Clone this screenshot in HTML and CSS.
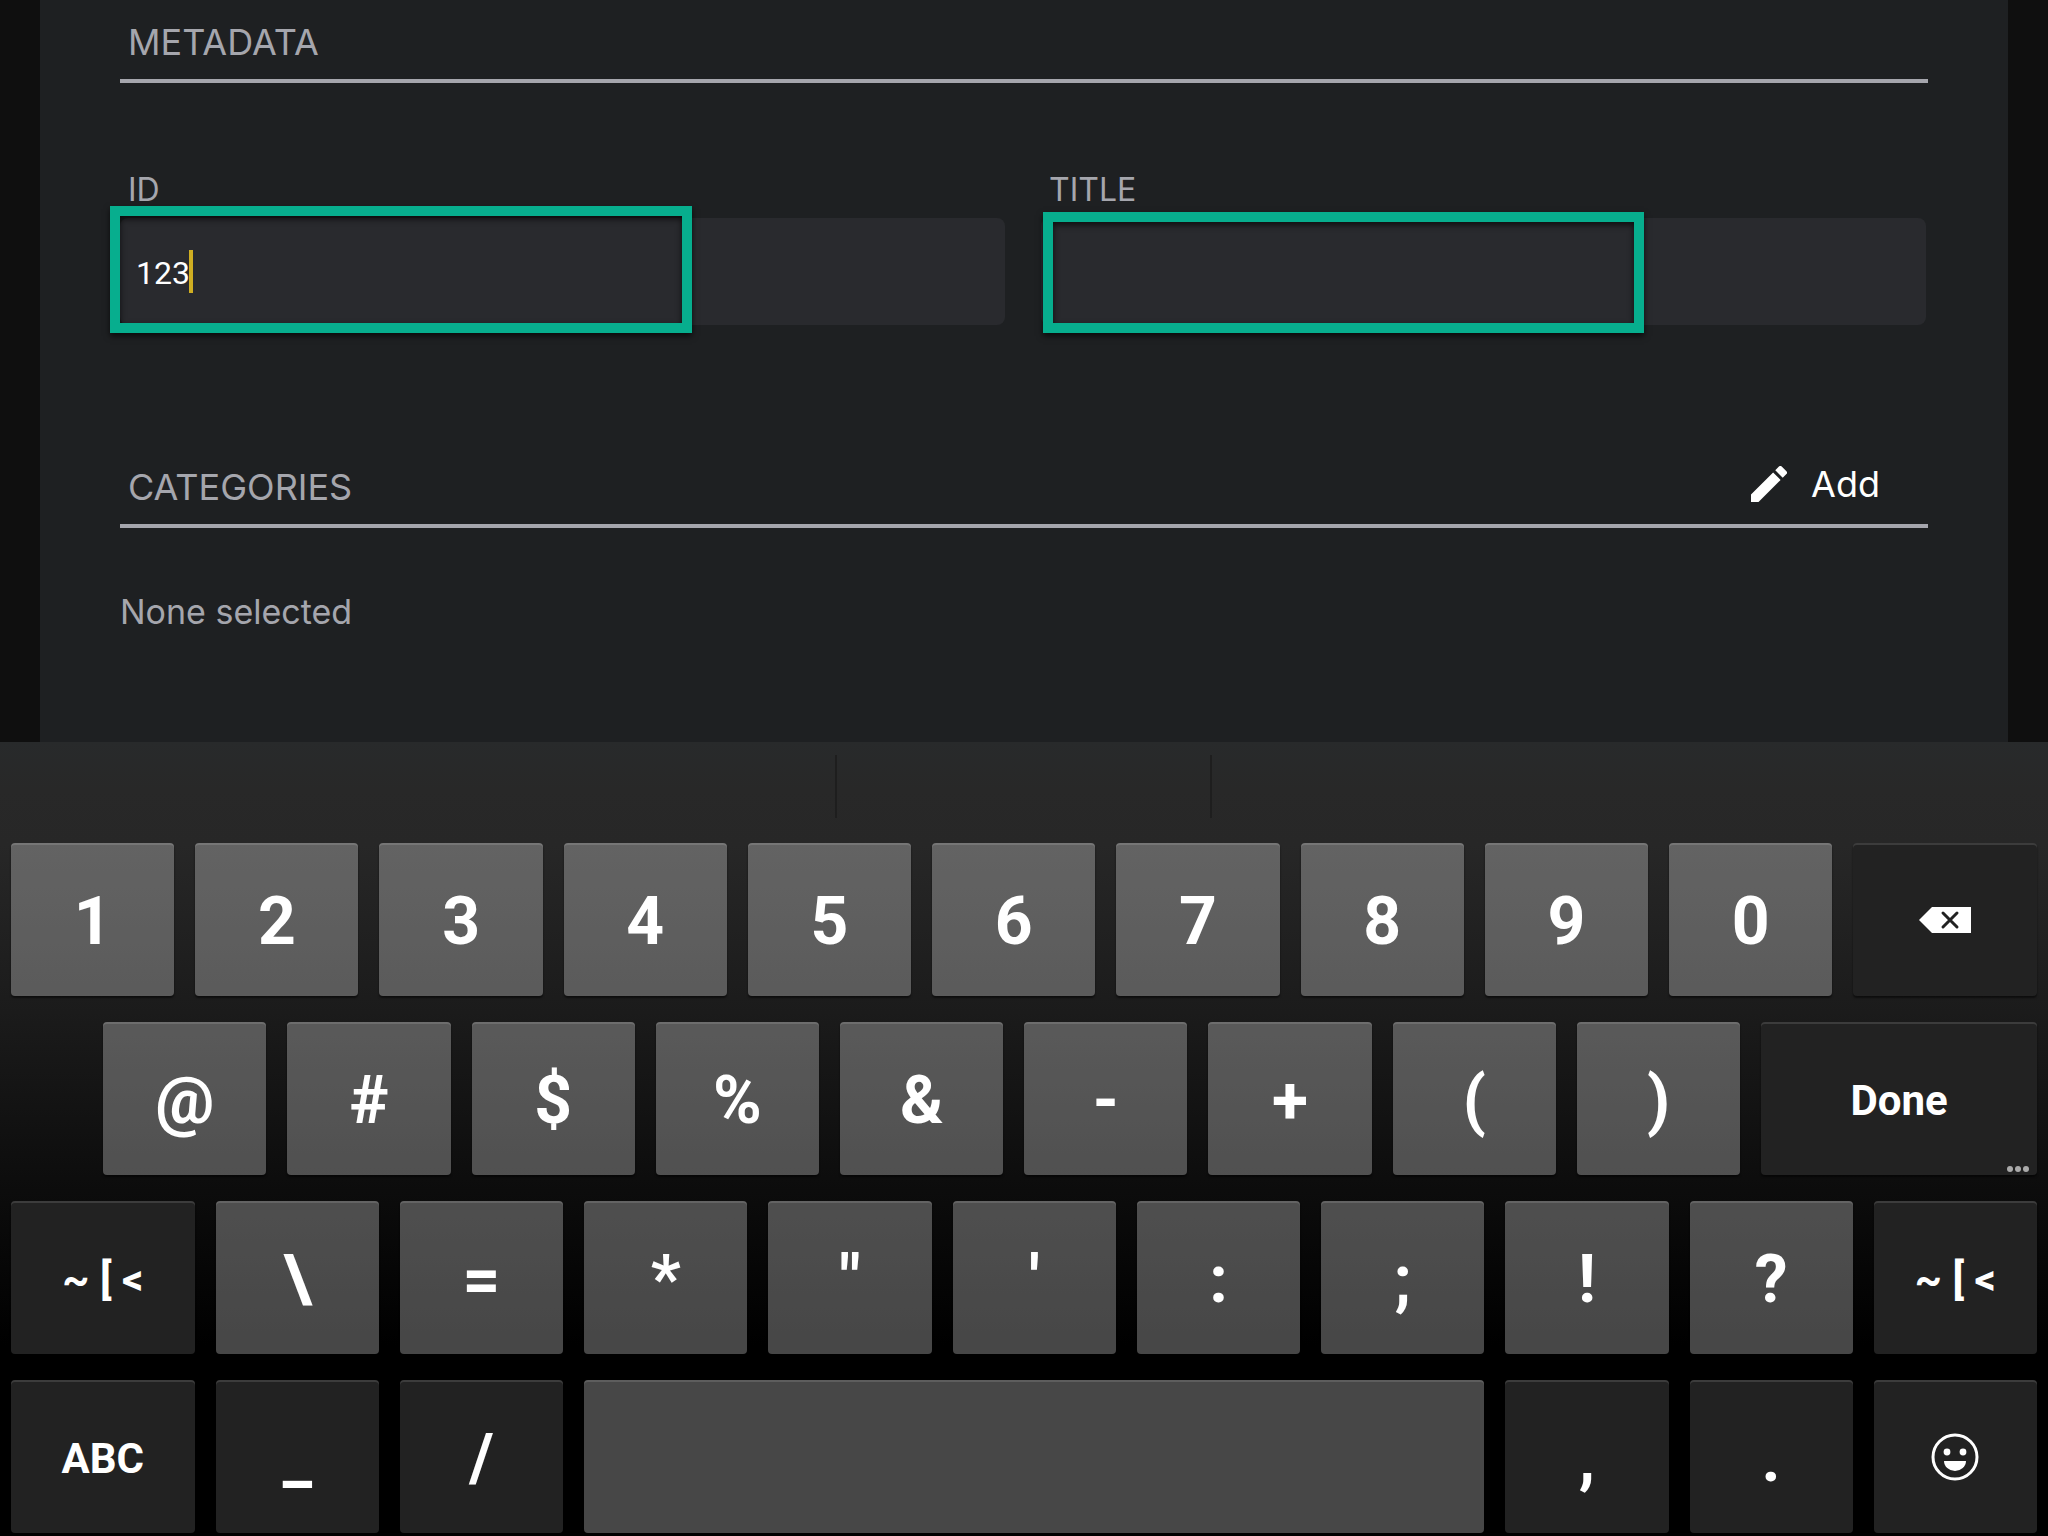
FILE: index.html
```html
<!DOCTYPE html>
<html lang="en">
<head>
<meta charset="utf-8">
<meta name="viewport" content="width=device-width, initial-scale=1">
<title>Metadata</title>
<link rel="stylesheet" href="styles.css">
</head>
<body>
<main class="panel">
  <header class="section-head">
    <h2 class="section-title">METADATA</h2>
  </header>
  <form class="fields">
    <div class="field">
      <label class="field-label" for="id">ID</label>
      <div class="field-box">
        <input class="field-input" id="id" type="text" value="123">
        <span class="caret"></span>
        <span class="marker marker-id"></span>
      </div>
    </div>
    <div class="field">
      <label class="field-label" for="title">TITLE</label>
      <div class="field-box">
        <input class="field-input" id="title" type="text">
        <span class="marker marker-title"></span>
      </div>
    </div>
  </form>
  <header class="section-head">
    <h2 class="section-title">CATEGORIES</h2>
    <button class="add" type="button">
      <svg class="add-icon" viewBox="3 3 18 18" aria-hidden="true"><path d="M3 17.25V21h3.75L17.81 9.94l-3.75-3.75L3 17.25zM20.71 7.04a1 1 0 0 0 0-1.41l-2.34-2.34a1 1 0 0 0-1.41 0l-1.83 1.83 3.75 3.75 1.83-1.83z" fill="currentColor"/></svg>
      Add
    </button>
  </header>
  <p class="empty">None selected</p>
</main>

<section class="keyboard" aria-label="Keyboard">
  <div class="suggestions"><span class="slot"></span><span class="slot"></span><span class="slot"></span></div>
  <div class="row">
    <button class="key">1</button>
    <button class="key">2</button>
    <button class="key">3</button>
    <button class="key">4</button>
    <button class="key">5</button>
    <button class="key">6</button>
    <button class="key">7</button>
    <button class="key">8</button>
    <button class="key">9</button>
    <button class="key">0</button>
    <button class="key dark wide icon" aria-label="Backspace">
      <svg class="backspace" viewBox="0 0 52 26" aria-hidden="true"><path d="M0 13 13 0H52V26H13Z" fill="#fff"/><path d="M24 6 38 20M38 6 24 20" stroke="#222" stroke-width="3" stroke-linecap="round"/></svg>
    </button>
  </div>
  <div class="row">
    <span class="indent"></span>
    <button class="key">@</button>
    <button class="key">#</button>
    <button class="key">$</button>
    <button class="key">%</button>
    <button class="key">&amp;</button>
    <button class="key">-</button>
    <button class="key">+</button>
    <button class="key">(</button>
    <button class="key">)</button>
    <button class="key dark done">Done
      <svg class="dots" viewBox="0 0 22 6" aria-hidden="true"><g fill="#aaa"><circle cx="3" cy="3" r="3"/><circle cx="11" cy="3" r="3"/><circle cx="19" cy="3" r="3"/></g></svg>
    </button>
  </div>
  <div class="row">
    <button class="key dark wide small">~ [ &lt;</button>
    <button class="key">\</button>
    <button class="key">=</button>
    <button class="key">*</button>
    <button class="key">"</button>
    <button class="key">'</button>
    <button class="key">:</button>
    <button class="key">;</button>
    <button class="key">!</button>
    <button class="key">?</button>
    <button class="key dark small">~ [ &lt;</button>
  </div>
  <div class="row">
    <button class="key dark wide small">ABC</button>
    <button class="key dark">_</button>
    <button class="key dark">/</button>
    <button class="key space" aria-label="Space"></button>
    <button class="key dark">,</button>
    <button class="key dark">.</button>
    <button class="key dark icon" aria-label="Emoji">
      <svg class="smiley" viewBox="0 0 48 48" aria-hidden="true"><circle cx="24" cy="24" r="22" fill="none" stroke="#fff" stroke-width="3"/><circle cx="16" cy="19" r="3.4" fill="#fff"/><circle cx="32" cy="19" r="3.4" fill="#fff"/><path d="M13 28H35A11 10 0 0 1 13 28Z" fill="#fff"/></svg>
    </button>
  </div>
</section>
</body>
</html>
```
FILE: styles.css
```css
* {
  box-sizing: border-box;
}

body {
  margin: 0;
  min-height: 100vh;
  display: flex;
  flex-direction: column;
  background: #0f0f0f;
  color: #a5a6ad;
  font-family: Inter, sans-serif;
}

button,
input {
  margin: 0;
  border: 0;
  font: inherit;
}

.panel {
  flex: 1;
  margin: 0 40px;
  padding: 0 80px;
  background: #1e2022;
}

.section-head {
  display: flex;
  align-items: center;
  justify-content: space-between;
  height: 83px;
  padding: 4px 48px 0 8px;
  border-bottom: 4px solid #a5a6ad;
}

.section-title {
  margin: 0;
  font-size: 36px;
  font-weight: 400;
  line-height: 40px;
}

.add {
  display: flex;
  align-items: center;
  gap: 24px;
  padding: 0 0 6px;
  background: none;
  color: #fff;
  font-size: 36px;
  line-height: 40px;
}

.add-icon {
  width: 36px;
  height: 36px;
}

.fields {
  display: grid;
  grid-template-columns: 1fr 1fr;
  gap: 36px;
  padding: 87px 2px 120px 0;
}

.field-label {
  display: block;
  padding: 0 8px 8px;
  font-size: 32px;
  line-height: 40px;
}

.field-box {
  position: relative;
}

.field-input {
  display: block;
  width: 100%;
  height: 107px;
  padding: 2px 16px 0;
  border-radius: 8px;
  background: #292a2e;
  color: #fff;
  font-family: Roboto, sans-serif;
  font-size: 32px;
  outline: 0;
}

.caret {
  position: absolute;
  left: 69px;
  top: 32px;
  width: 4px;
  height: 43px;
  background: #cfae22;
}

.marker {
  position: absolute;
  border: 10px solid #07ae8e;
  box-shadow: 0 3px 6px #000a, inset 0 3px 6px #000a;
  pointer-events: none;
}

.marker-id {
  left: -10px;
  top: -12px;
  width: 582px;
  height: 127px;
}

.marker-title {
  left: 2px;
  top: -6px;
  width: 601px;
  height: 121px;
}

.empty {
  margin: 0;
  padding: 64px 0;
  font-size: 34px;
  line-height: 40px;
}

.keyboard {
  padding-bottom: 3px;
  background: linear-gradient(#282a2b, #282828 6%, #272727 13%, #1b1b1b 34%, #0d0d0d 55%, #000 76%);
  color: #fff;
  font-family: Roboto, sans-serif;
  font-weight: 700;
}

.suggestions {
  display: grid;
  grid-template-columns: 835fr 375fr 838fr;
  height: 101px;
  padding: 13px 0 25px;
}

.slot + .slot {
  border-left: 2px solid #1e1e1e;
}

.row {
  display: grid;
  grid-template-columns: repeat(200, 1fr);
  grid-auto-rows: 153px;
  padding-right: 1px;
}

.row + .row {
  margin-top: 26px;
}

.indent {
  grid-column: span 9;
}

.key {
  position: relative;
  grid-column: span 18;
  display: flex;
  align-items: center;
  justify-content: center;
  margin: 0 10px 0 11px;
  padding: 4px 0 0;
  border-radius: 4px;
  background: #ffffff47;
  box-shadow: inset 0 2px #ffffff1f, 0 2px 2px #0008;
  color: #fff;
  font-size: 66px;
  line-height: 78px;
}

.dark {
  background: #222;
}

.wide {
  grid-column: span 20;
}

.space {
  grid-column: span 90;
}

.done {
  grid-column: span 29;
}

.small,
.done {
  font-size: 42px;
}

.icon {
  padding: 0;
}

.dots {
  position: absolute;
  right: 8px;
  bottom: 3px;
  width: 22px;
  height: 6px;
}

.backspace {
  width: 52px;
  height: 26px;
}

.smiley {
  width: 48px;
  height: 48px;
}
```
